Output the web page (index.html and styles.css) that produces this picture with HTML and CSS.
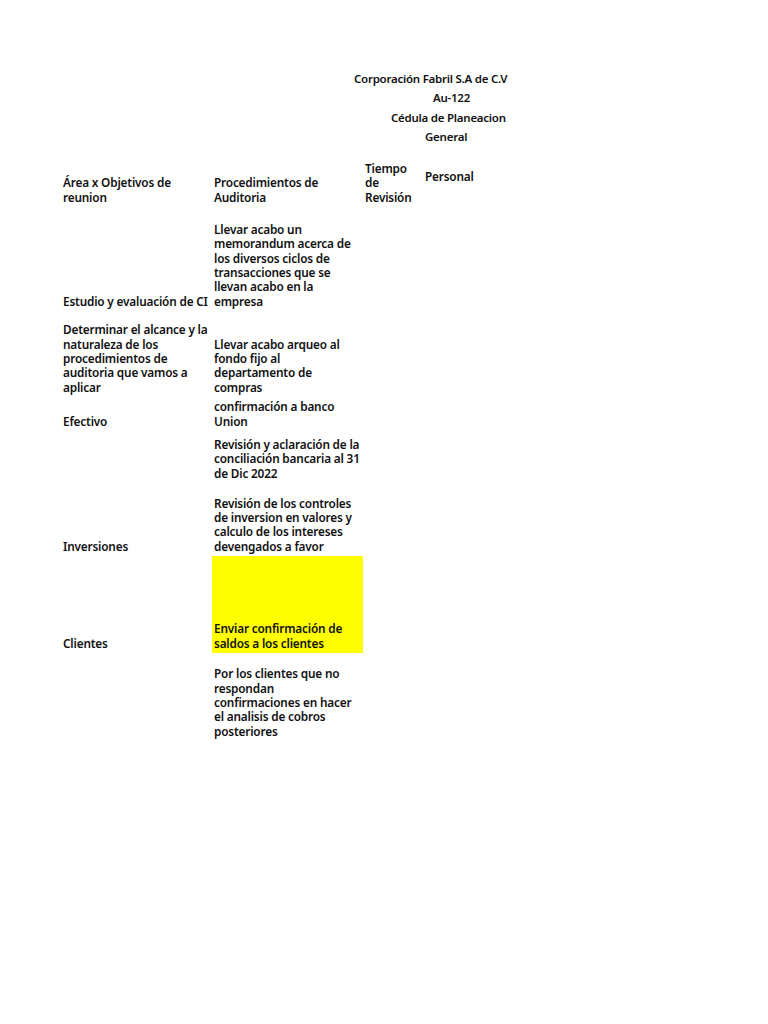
FILE: index.html
```html
<!DOCTYPE html>
<html lang="es">
<head>
<meta charset="utf-8">
<title>Cédula de Planeacion General</title>
<link rel="stylesheet" href="styles.css">
</head>
<body>
<div class="sheet">
  <div class="title">
    <div class="tl t1">Corporación Fabril S.A de C.V</div>
    <div class="tl t2">Au-122</div>
    <div class="tl t3">Cédula de Planeacion</div>
    <div class="tl t4">General</div>
  </div>
  <div class="grid">
    <div class="cell r-h">Área x Objetivos de<br>reunion</div>
    <div class="cell r-h">Procedimientos de<br>Auditoria</div>
    <div class="cell r-h">Tiempo<br>de<br>Revisión</div>
    <div class="cell r-h mid">Personal</div>

    <div class="cell r1 over">Estudio y evaluación de CI</div>
    <div class="cell r1">Llevar acabo un<br>memorandum acerca de<br>los diversos ciclos de<br>transacciones que se<br>llevan acabo en la<br>empresa</div>
    <div class="cell r1"></div>
    <div class="cell r1"></div>

    <div class="cell r2">Determinar el alcance y la<br>naturaleza de los<br>procedimientos de<br>auditoria que vamos a<br>aplicar</div>
    <div class="cell r2">Llevar acabo arqueo al<br>fondo fijo al<br>departamento de<br>compras</div>
    <div class="cell r2"></div>
    <div class="cell r2"></div>

    <div class="cell r3">Efectivo</div>
    <div class="cell r3">confirmación a banco<br>Union</div>
    <div class="cell r3"></div>
    <div class="cell r3"></div>

    <div class="cell r4"></div>
    <div class="cell r4">Revisión y aclaración de la<br>conciliación bancaria al 31<br>de Dic 2022</div>
    <div class="cell r4"></div>
    <div class="cell r4"></div>

    <div class="cell r5">Inversiones</div>
    <div class="cell r5">Revisión de los controles<br>de inversion en valores y<br>calculo de los intereses<br>devengados a favor</div>
    <div class="cell r5"></div>
    <div class="cell r5"></div>

    <div class="cell r6">Clientes</div>
    <div class="cell r6 yellow">Enviar confirmación de<br>saldos a los clientes</div>
    <div class="cell r6"></div>
    <div class="cell r6"></div>

    <div class="cell r7"></div>
    <div class="cell r7">Por los clientes que no<br>respondan<br>confirmaciones en hacer<br>el analisis de cobros<br>posteriores</div>
    <div class="cell r7"></div>
    <div class="cell r7"></div>
  </div>
</div>
</body>
</html>
```

FILE: styles.css
```css
html, body {
  margin: 0;
  padding: 0;
  background: #ffffff;
}

body {
  width: 768px;
  height: 1024px;
  overflow: hidden;
  color: #111111;
  font-family: "Noto Sans", "Open Sans", "Liberation Sans", sans-serif;
  font-size: 11.8px;
  font-weight: 600;
  letter-spacing: -0.18px;
}

.sheet {
  padding-top: 69px;
  padding-left: 61px;
}

.title {
  padding-left: 293px;
  font-size: 11.5px;
  letter-spacing: -0.25px;
}

.tl {
  height: 19.3px;
  line-height: 19.3px;
  white-space: nowrap;
}

.t2 { padding-left: 79px; }
.t3 { padding-left: 37px; }
.t4 { padding-left: 71px; }

.grid {
  margin-top: 1px;
  display: grid;
  grid-template-columns: 151px 151px 60px 120px;
  grid-template-rows: 60px 104px 86px 34px 52px 73px 97px 88px;
}

.cell {
  display: flex;
  flex-direction: column;
  justify-content: flex-end;
  padding: 0 0 3px 2px;
  line-height: 14.4px;
  white-space: nowrap;
}

.cell.mid {
  justify-content: center;
  padding-bottom: 2px;
}

.cell.over {
  overflow: visible;
}

.yellow {
  background: #ffff00;
}
```
